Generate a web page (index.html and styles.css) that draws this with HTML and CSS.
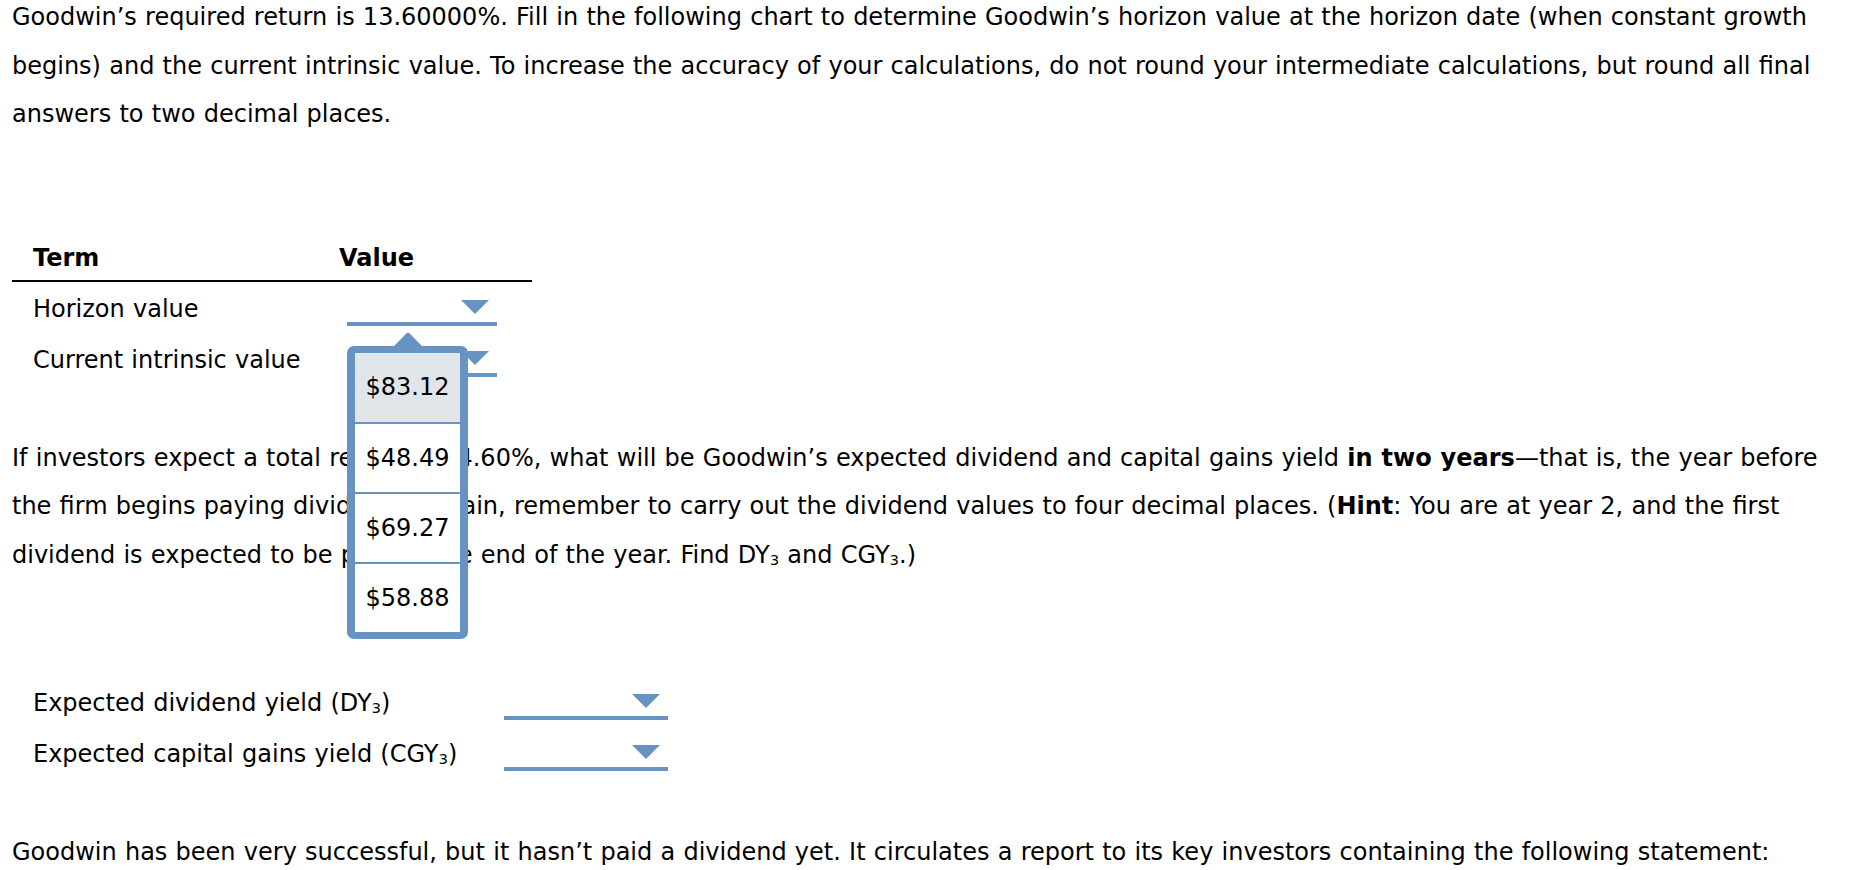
FILE: index.html
```html
<!DOCTYPE html>
<html lang="en">
<head>
<meta charset="utf-8">
<title>Goodwin horizon value</title>
<link rel="stylesheet" href="styles.css">
</head>
<body>
<main class="page">
  <p class="para intro">Goodwin’s required return is 13.60000%. Fill in the following chart to determine Goodwin’s horizon value at the horizon date (when constant growth begins) and the current intrinsic value. To increase the accuracy of your calculations, do not round your intermediate calculations, but round all final answers to two decimal places.</p>

  <div class="chart values">
    <div class="chart-head">
      <span class="col-term">Term</span>
      <span class="col-value">Value</span>
    </div>
    <div class="row">
      <span class="label">Horizon value</span>
      <span class="dropdown"><svg class="arrow" viewBox="0 0 28 14"><path d="M0 0H28L14 14Z"/></svg></span>
    </div>
    <div class="row">
      <span class="label">Current intrinsic value</span>
      <span class="dropdown"><svg class="arrow" viewBox="0 0 28 14"><path d="M0 0H28L14 14Z"/></svg></span>
    </div>

    <div class="menu">
      <svg class="caret" viewBox="0 0 28 14"><path d="M0 14L12.4 1.6Q14 0 15.6 1.6L28 14Z"/></svg>
      <div class="option active">$83.12</div>
      <div class="option">$48.49</div>
      <div class="option">$69.27</div>
      <div class="option">$58.88</div>
    </div>
  </div>

  <p class="para question">If investors expect a total return of 14.60%, what will be Goodwin’s expected dividend and capital gains yield <b>in two years</b>—that is, the year before the firm begins paying dividends? Again, remember to carry out the dividend values to four decimal places. (<b>Hint</b>: You are at year 2, and the first dividend is expected to be paid at the end of the year. Find DY<sub class="sub">3</sub> and CGY<sub class="sub">3</sub>.)</p>

  <div class="chart yields">
    <div class="row">
      <span class="label">Expected dividend yield (DY<sub class="sub">3</sub>)</span>
      <span class="dropdown"><svg class="arrow" viewBox="0 0 28 14"><path d="M0 0H28L14 14Z"/></svg></span>
    </div>
    <div class="row">
      <span class="label">Expected capital gains yield (CGY<sub class="sub">3</sub>)</span>
      <span class="dropdown"><svg class="arrow" viewBox="0 0 28 14"><path d="M0 0H28L14 14Z"/></svg></span>
    </div>
  </div>

  <p class="para closing">Goodwin has been very successful, but it hasn’t paid a dividend yet. It circulates a report to its key investors containing the following statement:</p>
</main>
</body>
</html>
```

FILE: styles.css
```css
html {
  overflow: hidden;
  background: #ffffff;
}

body {
  margin: 0;
  padding: 0 0 0 12px;
  font-family: "DejaVu Sans", Verdana, sans-serif;
  font-size: 24px;
  word-spacing: 0.6px;
  line-height: 48.5px;
  color: #000000;
  background: #ffffff;
}

.para {
  margin: 0;
}

.intro {
  margin-top: -7px;
}

.question {
  margin-top: 48px;
}

.closing {
  margin-top: 48px;
  white-space: nowrap;
}

.sub {
  font-size: 0.62em;
  line-height: 0;
  vertical-align: -0.14em;
}

/* chart tables */
.chart {
  position: relative;
}

.values {
  width: 520px;
  margin-top: 104px;
}

.yields {
  margin-top: 99px;
}

.chart-head {
  display: flex;
  font-weight: bold;
  line-height: 30px;
  padding-bottom: 7px;
  border-bottom: 2px solid #000000;
  margin-bottom: 2px;
}

.col-term {
  width: 327px;
  padding-left: 21px;
  box-sizing: border-box;
  flex: none;
}

.row {
  display: flex;
  align-items: flex-start;
  height: 51px;
  line-height: 51px;
}

.label {
  flex: none;
  width: 335px;
  padding-left: 21px;
  box-sizing: border-box;
  white-space: nowrap;
}

.yields .label {
  width: 492px;
}

.dropdown {
  flex: none;
  display: flex;
  justify-content: flex-end;
  width: 150px;
  height: 26px;
  margin-top: 16px;
  padding: 0 8px 8px 0;
  box-sizing: border-box;
  border-bottom: 4px solid #6793c2;
}

.yields .dropdown {
  width: 164px;
}

.arrow {
  display: block;
  width: 28px;
  height: 14px;
  fill: #6793c2;
}

/* open dropdown menu */
.menu {
  position: absolute;
  z-index: 2;
  left: 335px;
  top: 103px;
  width: 121px;
  box-sizing: border-box;
  border: 7px solid #6793c2;
  border-left-width: 8px;
  border-right-width: 8px;
  border-radius: 7px;
  background: #ffffff;
}

.caret {
  position: absolute;
  top: -21px;
  left: 50%;
  margin-left: -14px;
  width: 28px;
  height: 14px;
  fill: #6793c2;
}

.option {
  height: 68px;
  line-height: 68px;
  text-align: center;
  background: #ffffff;
}

.option + .option {
  border-top: 2px solid #6793c2;
}

.option.active {
  height: 69px;
  line-height: 69px;
  background: #dfe5e8;
}
```
